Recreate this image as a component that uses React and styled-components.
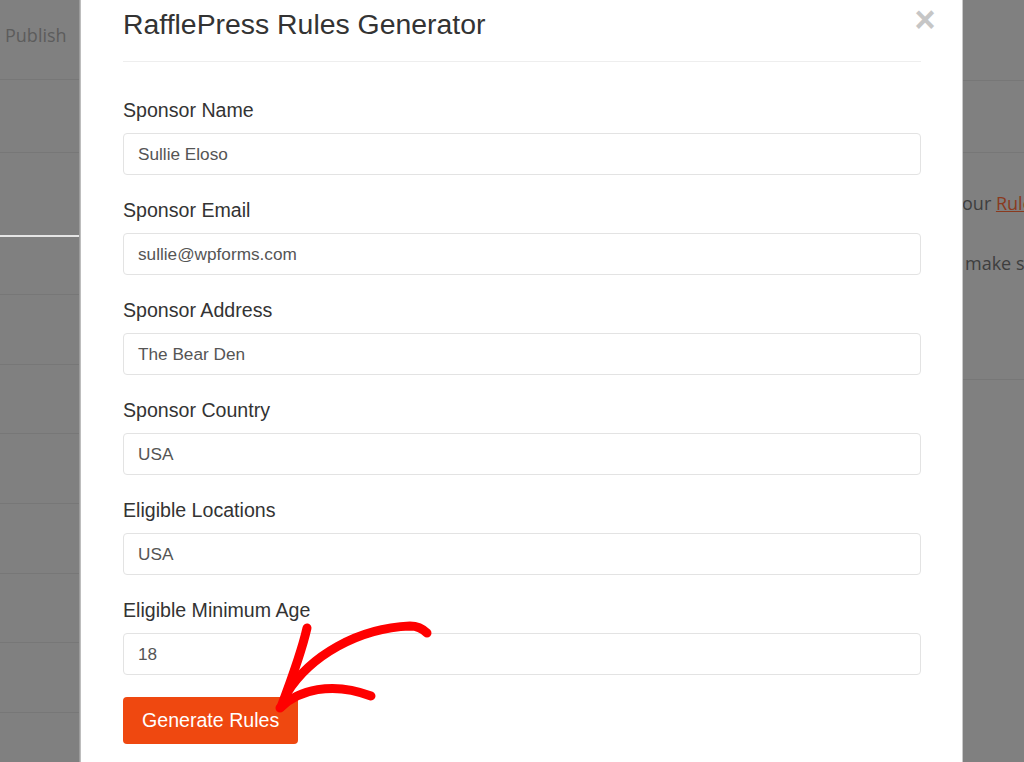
import React from "react";
import styled, { createGlobalStyle } from "styled-components";

const GlobalStyle = createGlobalStyle`
  html, body { margin: 0; padding: 0; }
  body { overflow: hidden; background: #808080; font-family: "Liberation Sans", Arial, sans-serif; }
  * { box-sizing: border-box; }
`;

const Stage = styled.div`
  position: relative;
  width: 1024px;
  height: 762px;
  overflow: hidden;
  display: flex;
  background: #808080;
`;

/* ---------- dimmed page behind the modal ---------- */
const Sidebar = styled.aside`
  width: 80px;
  flex: none;
  display: flex;
  flex-direction: column;
  border-right: 1px solid #9c9c9c;
  font-family: "Open Sans", sans-serif;
`;

const SideRow = styled.div`
  height: ${(p) => p.h}px;
  flex: none;
  padding: 22px 0 0 5px;
  border-bottom: ${(p) => (p.active ? "2px solid #e6e6e6" : "1px solid #777")};
  color: #5c5c5c;
  font-size: 18px;
  line-height: 26px;
`;

const Main = styled.main`
  flex: 1;
  display: flex;
  flex-direction: column;
  font-family: "Open Sans", sans-serif;
`;

const MainRow = styled.div`
  height: ${(p) => p.h}px;
  flex: none;
  border-bottom: 1px solid #777;
  display: flex;
  flex-direction: column;
  gap: 30px;
  padding-top: ${(p) => p.pt || 0}px;
`;

const BgLine = styled.div`
  height: 30px;
  line-height: 30px;
  white-space: nowrap;
  padding-left: ${(p) => p.indent}px;
  color: #3e3e3e;
  font-size: 18px;
`;

const BgLink = styled.span`
  color: #8a3a1e;
  text-decoration: underline;
`;

/* ---------- modal ---------- */
const Modal = styled.section`
  position: absolute;
  left: 80px;
  top: 0;
  bottom: 0;
  width: 883px;
  background: #fff;
  border-left: 1px solid #bdbdbd;
  border-right: 1px solid #c9c9c9;
  padding: 0 41px 0 42px;
  color: #333;
`;

const Header = styled.header`
  padding: 7px 0 20px;
  border-bottom: 1px solid #eeeeee;
`;

const Title = styled.h2`
  margin: 0;
  font-size: 28.4px;
  line-height: 34px;
  font-weight: 400;
  color: #333;
`;

const Close = styled.button`
  position: absolute;
  right: 26px;
  top: 0;
  width: 22px;
  height: 40px;
  border: 0;
  background: none;
  padding: 0;
  display: flex;
  align-items: center;
  justify-content: center;
  font-family: "Liberation Sans", Arial, sans-serif;
  font-size: 36px;
  line-height: 40px;
  font-weight: 700;
  color: #c6c6c6;
`;

const Form = styled.form`
  padding-top: 35px;
  display: flex;
  flex-direction: column;
  gap: 22px;
`;

const Field = styled.div`
  display: flex;
  flex-direction: column;
`;

const Label = styled.label`
  font-size: 19.6px;
  line-height: 26px;
  margin-bottom: 10px;
  color: #333;
`;

const Input = styled.div`
  height: 42px;
  border: 1px solid #e3e3e3;
  border-radius: 4px;
  padding-left: 14px;
  display: flex;
  align-items: center;
  font-size: 17.2px;
  color: #555;
`;

const Button = styled.button`
  align-self: flex-start;
  height: 47px;
  padding: 0 19px;
  border: 0;
  border-radius: 4px;
  background: #ef4810;
  color: #fff;
  font-family: "Liberation Sans", Arial, sans-serif;
  font-size: 19.6px;
`;

const Arrow = styled.svg`
  position: absolute;
  left: 265px;
  top: 615px;
  width: 175px;
  height: 110px;
  pointer-events: none;
  overflow: visible;
`;

const fields = [
  ["Sponsor Name", "Sullie Eloso"],
  ["Sponsor Email", "sullie@wpforms.com"],
  ["Sponsor Address", "The Bear Den"],
  ["Sponsor Country", "USA"],
  ["Eligible Locations", "USA"],
  ["Eligible Minimum Age", "18"],
];

export default function App() {
  return (
    <>
      <GlobalStyle />
      <Stage>
        <Sidebar>
          <SideRow h={80}>Publish</SideRow>
          <SideRow h={73} />
          <SideRow h={84} active />
          <SideRow h={58} />
          <SideRow h={70} />
          <SideRow h={69} />
          <SideRow h={70} />
          <SideRow h={70} />
          <SideRow h={69} />
          <SideRow h={70} />
        </Sidebar>
        <Main>
          <MainRow h={81} />
          <MainRow h={72} />
          <MainRow h={227} pt={35}>
            <BgLine indent={873}>
              your <BgLink>Rules</BgLink>
            </BgLine>
            <BgLine indent={885}>make sure</BgLine>
          </MainRow>
        </Main>

        <Modal>
          <Header>
            <Title>RafflePress Rules Generator</Title>
          </Header>
          <Close type="button">×</Close>
          <Form onSubmit={(e) => e.preventDefault()}>
            {fields.map(([label, value]) => (
              <Field key={label}>
                <Label>{label}</Label>
                <Input>{value}</Input>
              </Field>
            ))}
            <Button type="submit">Generate Rules</Button>
          </Form>
        </Modal>

        <Arrow viewBox="265 615 175 110">
          <g fill="none" stroke="#ff0000" strokeLinecap="round" strokeLinejoin="round">
            <path d="M307,628 C302,650 292,678 281,707" strokeWidth="9" />
            <path d="M287,693 C310,656 358,628 410,626 C418,626 423,629 427,633" strokeWidth="9" />
            <path d="M280,708 C298,690 332,681 371,696" strokeWidth="9" />
          </g>
        </Arrow>
      </Stage>
    </>
  );
}
